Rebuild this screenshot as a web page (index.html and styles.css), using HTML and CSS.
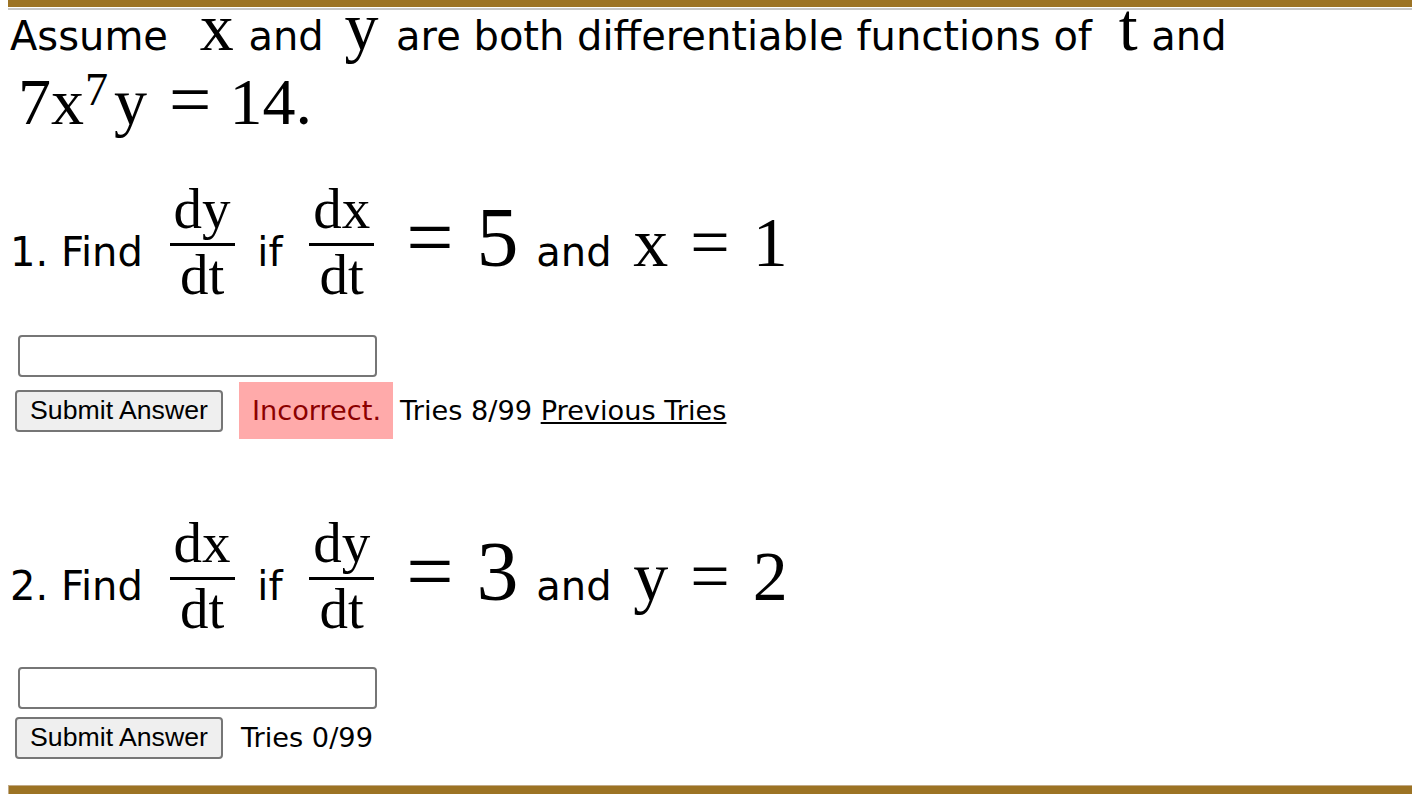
FILE: index.html
```html
<!DOCTYPE html>
<html lang="en">
<head>
<meta charset="utf-8">
<title>Related rates</title>
<link rel="stylesheet" href="styles.css">
</head>
<body>
<div class="bar-top"></div>
<div class="rule"></div>

<p class="intro">Assume <span class="mi m-x">x</span> and <span class="mi m-y">y</span> are both differentiable functions of <span class="mi m-t">t</span> and</p>
<p class="eq">7x<span class="sup">7</span>y<span class="mo">=</span>14.</p>

<div class="prob">1. Find <span class="frac"><span class="num">dy</span><span class="den">dt</span></span> if <span class="frac"><span class="num">dx</span><span class="den">dt</span></span><span class="big"><span class="mo">=</span>5</span> and <span class="mid">x<span class="mo">=</span>1</span></div>
<input class="answer" type="text">
<div class="row">
  <button class="submit" type="button">Submit Answer</button>
  <span class="incorrect">Incorrect.</span>
  <span class="tries">Tries 8/99 <a class="prev" href="#">Previous Tries</a></span>
</div>

<div class="prob prob2">2. Find <span class="frac"><span class="num">dx</span><span class="den">dt</span></span> if <span class="frac"><span class="num">dy</span><span class="den">dt</span></span><span class="big"><span class="mo">=</span>3</span> and <span class="mid">y<span class="mo">=</span>2</span></div>
<input class="answer answer2" type="text">
<div class="row row2">
  <button class="submit" type="button">Submit Answer</button>
  <span class="tries tries0">Tries 0/99</span>
</div>

<div class="bar-bottom"></div>
</body>
</html>
```

FILE: styles.css
```css
html, body {
  margin: 0;
  padding: 0;
  background: #ffffff;
  color: #000000;
  overflow: hidden;
}

body {
  padding: 0 8px;
  font-family: "DejaVu Sans", Verdana, sans-serif;
  font-size: 40px;
}

.bar-top {
  height: 7px;
  background: #9c7324;
}

.rule {
  margin-top: 1px;
  height: 2px;
  background: #c8c8c8;
}

.intro {
  margin: 0;
  padding-left: 2px;
  line-height: 52px;
  white-space: nowrap;
}

.mi {
  display: inline-block;
  font-family: "Liberation Serif", "Times New Roman", serif;
  font-size: 68px;
  line-height: 54px;
  padding-bottom: 12px;
  margin-top: -10px;
  margin-bottom: -12px;
}

.m-x { margin-left: 19px; margin-right: 2px; }
.m-y { margin-left: 8px; margin-right: 5px; }
.m-t { margin-left: 14px; margin-right: 1px; }

.eq {
  margin: 0;
  padding: 3px 0 0 10px;
  font-family: "Liberation Serif", "Times New Roman", serif;
  font-size: 66px;
  line-height: 73px;
}

.eq .sup {
  font-size: 0.7em;
  line-height: 40px;
  vertical-align: 0.42em;
  margin: 0 6px 0 1px;
}

.eq .mo {
  font-size: 75px;
  line-height: 40px;
  margin: 0 18px 0 22px;
}

.mo {
  margin: 0 0.278em;
}

.prob {
  margin-top: 42px;
  padding-left: 2px;
  white-space: nowrap;
}

.frac {
  display: inline-flex;
  flex-direction: column;
  align-items: stretch;
  text-align: center;
  font-family: "Liberation Serif", "Times New Roman", serif;
  font-size: 57px;
  line-height: 1;
  vertical-align: 38px;
  margin: 0 10px 0 14px;
}

.num {
  padding: 0 4px 6px;
  border-bottom: 3px solid #000;
}

.den {
  padding: 0 4px;
}

.big {
  font-family: "Liberation Serif", "Times New Roman", serif;
  font-size: 84px;
  line-height: 1;
  margin-right: 5px;
}

.big .mo {
  margin-left: 22px;
  margin-right: 23px;
}

.mid {
  font-family: "Liberation Serif", "Times New Roman", serif;
  font-size: 70px;
  line-height: 1;
  margin-left: 9px;
}

.mid .mo {
  margin: 0 23px 0 22px;
}

.answer {
  display: block;
  box-sizing: border-box;
  width: 359px;
  height: 42px;
  margin: 32px 0 0 10px;
  border: 2px solid #767676;
  border-radius: 4px;
  background: #fff;
  padding: 0;
}

.row {
  display: flex;
  align-items: center;
  height: 57px;
  margin-top: 5px;
}

.row2 {
  margin-top: 0;
}

.submit {
  box-sizing: border-box;
  width: 208px;
  height: 42px;
  margin-left: 7px;
  padding: 0;
  border: 2px solid #767676;
  border-radius: 4px;
  background: #efefef;
  color: #000;
  font-family: "Liberation Sans", Arial, sans-serif;
  font-size: 26.67px;
}

.incorrect {
  margin-left: 16px;
  height: 57px;
  line-height: 57px;
  padding: 0 12px 0 13px;
  background: #ffaaaa;
  color: #8b0000;
  font-size: 27.2px;
}

.tries {
  margin-left: 7px;
  font-size: 27.2px;
}

.tries0 {
  margin-left: 18px;
}

.prev {
  color: #000;
  text-decoration: underline;
}

.prob2 {
  margin-top: 75px;
}

.answer2 {
  margin-top: 30px;
}

.bar-bottom {
  margin-top: 19px;
  height: 12px;
  background: #9c7324;
  border-top: 1px solid #c2aa86;
  border-left: 1px solid #c2aa86;
}
```
